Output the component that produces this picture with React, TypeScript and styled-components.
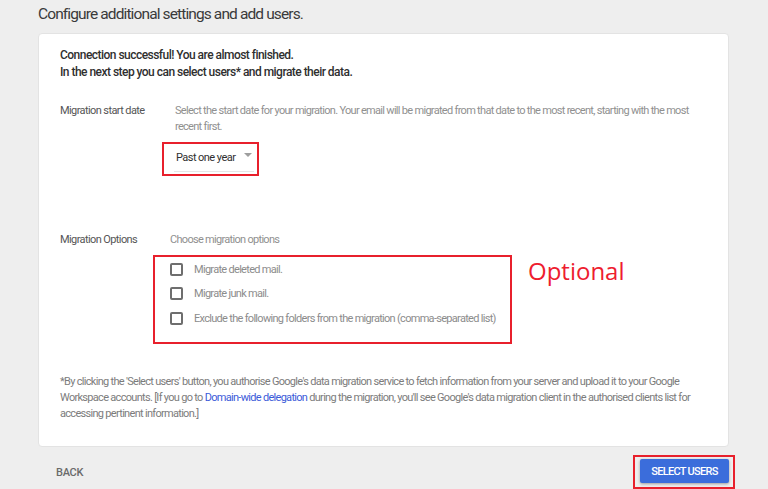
import React from "react";
import styled, { createGlobalStyle } from "styled-components";

const GlobalStyle = createGlobalStyle`
  html, body {
    margin: 0;
    padding: 0;
    background: #eeeeee;
  }
  body {
    font-family: Roboto, "Liberation Sans", Arial, sans-serif;
  }
  * {
    box-sizing: border-box;
  }
`;

const checkboxOptions = [
  "Migrate deleted mail.",
  "Migrate junk mail.",
  "Exclude the following folders from the migration (comma-separated list)",
];

const App = () => {
  return (
    <Page>
      <GlobalStyle />
      <Title>Configure additional settings and add users.</Title>
      <Card>
        <Intro>
          Connection successful! You are almost finished.
          <br />
          In the next step you can select users* and migrate their data.
        </Intro>

        <Section $labelWidth={115} $top={22}>
          <Label>Migration start date</Label>
          <div>
            <Description>
              Select the start date for your migration. Your email will be
              migrated from that date to the most recent, starting with the most
              recent first.
            </Description>
            <SelectMark>
              <Select>
                <span>Past one year</span>
                <Caret />
              </Select>
            </SelectMark>
          </div>
        </Section>

        <Section $labelWidth={110} $top={56}>
          <Label>Migration Options</Label>
          <div>
            <Description>Choose migration options</Description>
            <OptionsRow>
              <OptionsMark>
                {checkboxOptions.map((text) => (
                  <CheckRow key={text}>
                    <Checkbox />
                    <span>{text}</span>
                  </CheckRow>
                ))}
              </OptionsMark>
              <Optional>Optional</Optional>
            </OptionsRow>
          </div>
        </Section>

        <Note>
          *By clicking the 'Select users' button, you authorise Google's data
          migration service to fetch information from your server and upload it
          to your Google Workspace accounts. [If you go to{" "}
          <a href="#">Domain-wide delegation</a> during the migration, you'll
          see Google's data migration client in the authorised clients list for
          accessing pertinent information.]
        </Note>
      </Card>

      <Footer>
        <BackButton>BACK</BackButton>
        <ButtonMark>
          <PrimaryButton>SELECT USERS</PrimaryButton>
        </ButtonMark>
      </Footer>
    </Page>
  );
};

const Page = styled.div`
  width: 768px;
  height: 489px;
  overflow: hidden;
  padding: 0 39px 0 38px;
`;

const Title = styled.h1`
  margin: 0;
  height: 33px;
  padding-top: 4px;
  font-size: 15.5px;
  font-weight: 400;
  line-height: 20px;
  color: #3a3a3a;
  letter-spacing: -0.88px;
`;

const Card = styled.div`
  height: 414px;
  background: #ffffff;
  border: 1px solid #e3e3e3;
  border-radius: 4px;
  padding: 13px 21px 0 21px;
`;

const Intro = styled.p`
  margin: 0;
  font-size: 12px;
  font-weight: 500;
  line-height: 17px;
  color: #2f2f2f;
  letter-spacing: -0.53px;
`;

const Section = styled.div<{ $labelWidth: number; $top: number }>`
  display: grid;
  grid-template-columns: ${(p) => p.$labelWidth}px 1fr;
  margin-top: ${(p) => p.$top}px;
`;

const Label = styled.div`
  font-size: 11px;
  line-height: 16px;
  color: #555555;
  letter-spacing: -0.6px;
`;

const Description = styled.div`
  font-size: 11px;
  line-height: 16px;
  color: #909090;
  letter-spacing: -0.7px;
`;

const SelectMark = styled.div`
  width: 97px;
  height: 34px;
  margin: 7px 0 0 -13px;
  border: 2px solid #e8202c;
  padding: 0 3px 0 10px;
`;

const Select = styled.div`
  display: flex;
  align-items: center;
  justify-content: space-between;
  height: 28px;
  border-bottom: 1px solid #e6e6e6;
  padding: 0 2px 0 2px;
  font-size: 11px;
  color: #2f2f2f;
  letter-spacing: -0.55px;
`;

const Caret = styled.span`
  width: 0;
  height: 0;
  border-left: 4px solid transparent;
  border-right: 4px solid transparent;
  border-top: 4px solid #9e9e9e;
  margin-bottom: 6px;
`;

const OptionsRow = styled.div`
  display: flex;
  align-items: flex-start;
  margin: 7px 0 0 -17px;
`;

const OptionsMark = styled.div`
  width: 359px;
  height: 89px;
  border: 2px solid #e8202c;
  padding: 0 0 0 15px;
  display: flex;
  flex-direction: column;
`;

const CheckRow = styled.div`
  display: flex;
  align-items: center;
  gap: 11px;
  height: 24.5px;
  font-size: 11px;
  color: #8c8c8c;
  letter-spacing: -0.7px;
  white-space: nowrap;
`;

const Checkbox = styled.span`
  width: 13px;
  height: 13px;
  border: 2px solid #6e6e6e;
  border-radius: 2px;
  flex-shrink: 0;
`;

const Optional = styled.div`
  margin: 1px 0 0 16px;
  font-family: "Open Sans", "Noto Sans", sans-serif;
  font-size: 24px;
  line-height: 30px;
  color: #ee1d2f;
`;

const Note = styled.p`
  margin: 30px 0 0 0;
  font-size: 11px;
  line-height: 16px;
  color: #7c7c7c;
  letter-spacing: -0.7px;

  a {
    color: #3b5bd9;
    text-decoration: none;
  }
`;

const Footer = styled.div`
  display: flex;
  align-items: center;
  justify-content: space-between;
  padding: 8px 0 0 18px;
`;

const BackButton = styled.button`
  background: none;
  border: none;
  padding: 0;
  font-family: Roboto, sans-serif;
  font-size: 11px;
  font-weight: 500;
  color: #6a6a6a;
  letter-spacing: -0.3px;
`;

const ButtonMark = styled.div`
  border: 2px solid #e8202c;
  padding: 2px 4px 4px 5px;
  margin-right: -6px;
`;

const PrimaryButton = styled.button`
  display: block;
  width: 89px;
  height: 24px;
  background: #3b6ddb;
  border: none;
  border-radius: 2px;
  box-shadow: 0 1px 3px rgba(0, 0, 0, 0.35);
  font-family: Roboto, sans-serif;
  font-size: 11px;
  font-weight: 500;
  color: #ffffff;
  letter-spacing: -0.7px;
`;

export default App;
